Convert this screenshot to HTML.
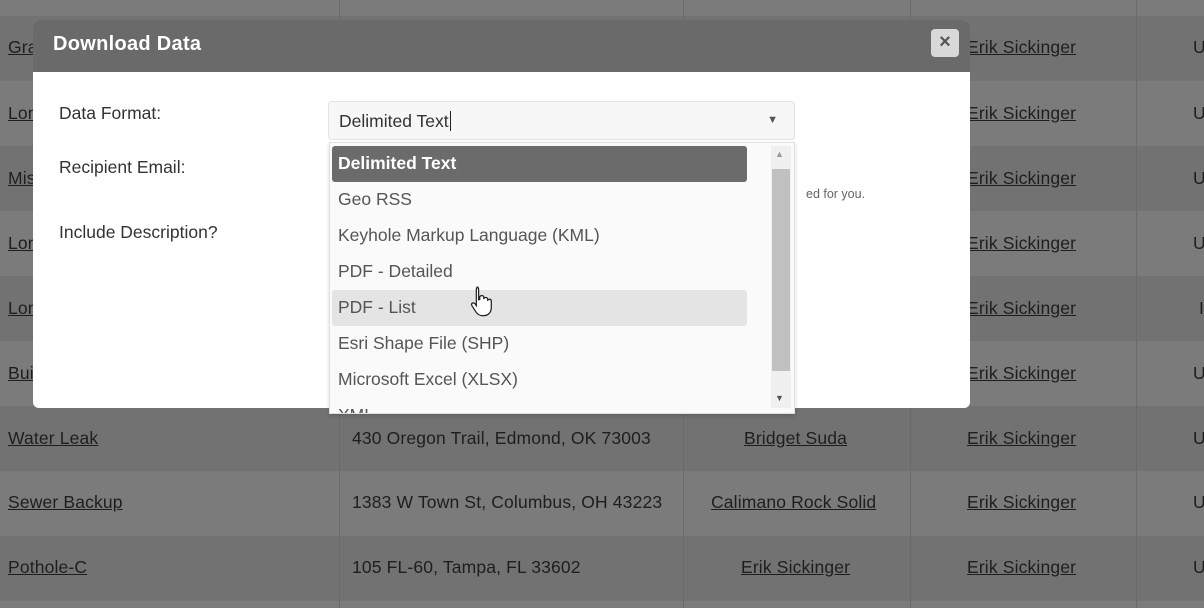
<!DOCTYPE html>
<html style="width:1204px;height:608px;overflow:hidden;background:#7a7a7a"><head><style>
*{margin:0;padding:0;box-sizing:border-box}
body{width:1204px;height:608px;overflow:hidden;background:#7a7a7a;font-family:"Liberation Sans",sans-serif;position:relative}
.row{position:absolute;left:0;width:1204px;height:65px}
.d{background:#727272}.l{background:#7b7b7b}
.vl{position:absolute;top:0;height:608px;width:1px;background:#6a6a6a}
.c{position:absolute;font-size:17.5px;color:#1e1e1e;white-space:nowrap;letter-spacing:0.15px}
.u{text-decoration:underline}
.modal{position:absolute;left:33px;top:20px;width:937px;height:388px;background:#fff;border-radius:6px;overflow:hidden}
.hd{height:52px;background:#6a6a6a;color:#fff;font-weight:bold;font-size:20px;padding:13px 20px;letter-spacing:0.3px}
.x{position:absolute;left:898px;top:9px;width:28px;height:28px;background:#d8d8d8;border-radius:4px;color:#555;font-size:20px;text-align:center;line-height:27px;font-weight:bold}
.lb{position:absolute;left:26px;font-size:17.5px;color:#333}
.sel{position:absolute;left:328px;top:101px;width:467px;height:39px;background:#f7f7f7;border:1px solid #e2e2e2;border-radius:4px;font-size:17.5px;color:#333;padding:9px 10px}
.dd{position:absolute;left:329px;top:142px;width:466px;height:272px;background:#fafafa;border:1px solid #e0e0e0;box-shadow:0 2px 4px rgba(0,0,0,.15);overflow:hidden}
.it{position:absolute;left:2px;width:415px;height:36px;font-size:17.5px;color:#555;padding:7px 6px;border-radius:3px}
</style></head><body>
<div class="row l" style="top:-49px"></div>
<div class="row d" style="top:16px"></div>
<div class="row l" style="top:81px"></div>
<div class="row d" style="top:146px"></div>
<div class="row l" style="top:211px"></div>
<div class="row d" style="top:276px"></div>
<div class="row l" style="top:341px"></div>
<div class="row d" style="top:406px"></div>
<div class="row l" style="top:471px"></div>
<div class="row d" style="top:536px"></div>
<div class="row l" style="top:601px;height:7px"></div>
<div class="vl" style="left:339px"></div>
<div class="vl" style="left:683px"></div>
<div class="vl" style="left:910px"></div>
<div class="vl" style="left:1136px"></div>

<div class="c u" style="left:8px;top:37px">Gra</div>
<div class="c u" style="left:8px;top:103px">Lon</div>
<div class="c u" style="left:8px;top:168px">Mis</div>
<div class="c u" style="left:8px;top:233px">Lon</div>
<div class="c u" style="left:8px;top:298px">Lon</div>
<div class="c u" style="left:8px;top:363px">Bui</div>
<div class="c u" style="left:8px;top:428px">Water Leak</div>
<div class="c u" style="left:8px;top:492px">Sewer Backup</div>
<div class="c u" style="left:8px;top:557px">Pothole-C</div>
<div class="c" style="left:352px;top:428px">430 Oregon Trail, Edmond, OK 73003</div>
<div class="c" style="left:352px;top:492px">1383 W Town St, Columbus, OH 43223</div>
<div class="c" style="left:352px;top:557px">105 FL-60, Tampa, FL 33602</div>
<div class="c u" style="left:744px;top:428px">Bridget Suda</div>
<div class="c u" style="left:711px;top:492px">Calimano Rock Solid</div>
<div class="c u" style="left:741px;top:557px">Erik Sickinger</div>
<div class="c u" style="left:967px;top:37px">Erik Sickinger</div>
<div class="c u" style="left:967px;top:103px">Erik Sickinger</div>
<div class="c u" style="left:967px;top:168px">Erik Sickinger</div>
<div class="c u" style="left:967px;top:233px">Erik Sickinger</div>
<div class="c u" style="left:967px;top:298px">Erik Sickinger</div>
<div class="c u" style="left:967px;top:363px">Erik Sickinger</div>
<div class="c u" style="left:967px;top:428px">Erik Sickinger</div>
<div class="c u" style="left:967px;top:492px">Erik Sickinger</div>
<div class="c u" style="left:967px;top:557px">Erik Sickinger</div>
<div class="c" style="left:1193px;top:37px">U</div>
<div class="c" style="left:1193px;top:103px">U</div>
<div class="c" style="left:1193px;top:168px">U</div>
<div class="c" style="left:1193px;top:233px">U</div>
<div class="c" style="left:1199px;top:298px">I</div>
<div class="c" style="left:1193px;top:363px">U</div>
<div class="c" style="left:1193px;top:428px">U</div>
<div class="c" style="left:1193px;top:492px">U</div>
<div class="c" style="left:1193px;top:557px">U</div>

<div class="modal">
<div class="hd">Download Data</div>
<div class="x">×</div>
<div class="lb" style="top:83px">Data Format:</div>
<div class="lb" style="top:137px">Recipient Email:</div>
<div class="lb" style="top:202px">Include Description?</div>
<div style="position:absolute;left:773px;top:167px;font-size:12.5px;color:#666">ed for you.</div>
</div>

<div class="sel">Delimited Text<span style="border-left:1px solid #222;margin-left:1px"></span><span style="position:absolute;right:16px;top:12px;font-size:11px;color:#555">▼</span></div>
<div class="dd">
<div class="it" style="top:3px;background:#6b6b6b;color:#fff;font-weight:bold">Delimited Text</div>
<div class="it" style="top:39px">Geo RSS</div>
<div class="it" style="top:75px">Keyhole Markup Language (KML)</div>
<div class="it" style="top:111px">PDF - Detailed</div>
<div class="it" style="top:147px;background:#e4e4e4">PDF - List</div>
<div class="it" style="top:183px">Esri Shape File (SHP)</div>
<div class="it" style="top:219px">Microsoft Excel (XLSX)</div>
<div class="it" style="top:255px">XML</div>
<div style="position:absolute;left:441px;top:3px;width:20px;height:262px;background:#f0f0f0"></div>
<div style="position:absolute;left:442px;top:26px;width:18px;height:202px;background:#c0c0c0"></div>
<div style="position:absolute;left:445px;top:6px;font-size:9px;color:#999">▲</div>
<div style="position:absolute;left:445px;top:250px;font-size:9px;color:#555">▼</div>
<svg style="position:absolute;left:139px;top:142px" width="26" height="34" viewBox="0 0 22 30"><path d="M6 2c1.2 0 2 .8 2 2v9l1-.2V11c0-1 .8-1.6 1.8-1.6S12.6 10 12.6 11v1.5c0-1 .8-1.5 1.7-1.5s1.7.6 1.7 1.6v1.4c0-.9.8-1.4 1.6-1.4.9 0 1.6.6 1.6 1.6V20c0 4-2.6 7-6.5 7H11c-2.5 0-4-1.3-5.2-3L2 18c-.6-1 0-2 1-2.2.8-.1 1.5.3 2 1l1 1.4V4c0-1.2.8-2 2-2z" fill="#fff" stroke="#222" stroke-width="1.1"/></svg>
</div>
</body></html>
